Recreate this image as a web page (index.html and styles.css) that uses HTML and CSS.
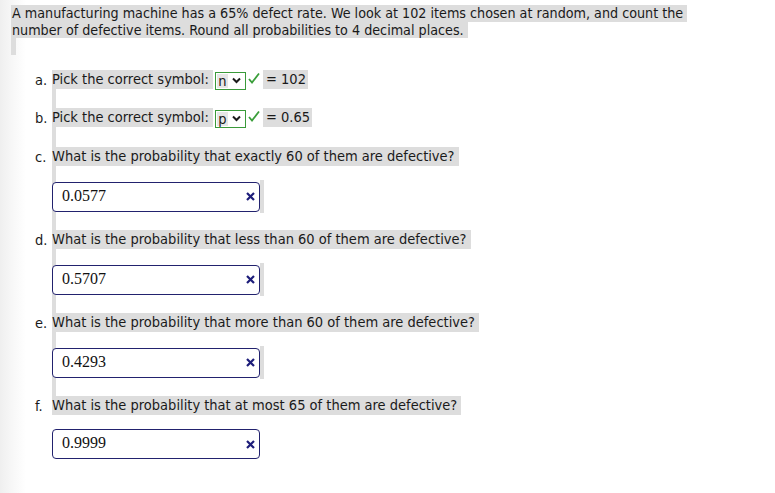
FILE: index.html
```html
<!DOCTYPE html>
<html>
<head>
<meta charset="utf-8">
<link rel="stylesheet" href="styles.css">
</head>
<body>
<div class="problem">
  <div class="line">A manufacturing machine has a 65% defect rate. We look at 102 items chosen at random, and count the </div>
  <div class="line">number of defective items. Round all probabilities to 4 decimal places. </div>
  <div class="empty"></div>
</div>

<div class="parts">
  <div class="sel">
    <div class="q">
      <span class="mk">a.</span><span class="hl">Pick the correct symbol: </span><span class="select"><span class="val">n</span><svg class="chev" width="9" height="7" viewBox="0 0 9 7"><polyline points="1,1.5 4.5,5 8,1.5" fill="none" stroke="#1a1a1a" stroke-width="2"/></svg></span><svg class="check" width="12" height="12" viewBox="0 0 12 12"><polyline points="1,7 4,10.5 11,1.5" fill="none" stroke="#3a9e3a" stroke-width="1.8"/></svg><span class="hl eq">= 102</span>
    </div>
    <div class="gap-ab"></div>
    <div class="q">
      <span class="mk">b.</span><span class="hl">Pick the correct symbol: </span><span class="select"><span class="val">p</span><svg class="chev" width="9" height="7" viewBox="0 0 9 7"><polyline points="1,1.5 4.5,5 8,1.5" fill="none" stroke="#1a1a1a" stroke-width="2"/></svg></span><svg class="check" width="12" height="12" viewBox="0 0 12 12"><polyline points="1,7 4,10.5 11,1.5" fill="none" stroke="#3a9e3a" stroke-width="1.8"/></svg><span class="hl eq">= 0.65</span>
    </div>
    <div class="gap-bc"></div>

    <div class="q"><span class="mk">c.</span><span class="hl">What is the probability that exactly 60 of them are defective? </span></div>
    <div class="ans">
      <div class="field"><span class="num">0.0577</span><svg class="x" width="9" height="9" viewBox="0 0 9 9"><path d="M1 1L8 8M8 1L1 8" stroke="#1d1d7a" stroke-width="2.2" fill="none"/></svg></div><span class="tail"></span>
    </div>

    <div class="q"><span class="mk">d.</span><span class="hl">What is the probability that less than 60 of them are defective? </span></div>
    <div class="ans">
      <div class="field"><span class="num">0.5707</span><svg class="x" width="9" height="9" viewBox="0 0 9 9"><path d="M1 1L8 8M8 1L1 8" stroke="#1d1d7a" stroke-width="2.2" fill="none"/></svg></div><span class="tail"></span>
    </div>

    <div class="q"><span class="mk">e.</span><span class="hl">What is the probability that more than 60 of them are defective? </span></div>
    <div class="ans">
      <div class="field"><span class="num">0.4293</span><svg class="x" width="9" height="9" viewBox="0 0 9 9"><path d="M1 1L8 8M8 1L1 8" stroke="#1d1d7a" stroke-width="2.2" fill="none"/></svg></div><span class="tail"></span>
    </div>

    <div class="q"><span class="mk">f.</span><span class="hl">What is the probability that at most 65 of them are defective? </span></div>
  </div>
  <div class="ans last">
    <div class="field"><span class="num">0.9999</span><svg class="x" width="9" height="9" viewBox="0 0 9 9"><path d="M1 1L8 8M8 1L1 8" stroke="#1d1d7a" stroke-width="2.2" fill="none"/></svg></div>
  </div>
</div>
</body>
</html>
```
FILE: styles.css
```css
html, body {
  margin: 0;
  height: 100%;
}
body {
  background: linear-gradient(to right, #efefef 0px, #f7f7f7 12px, #fff 26px);
  font-family: "DejaVu Sans Condensed", "DejaVu Sans", sans-serif;
  font-size: 14.2px;
  color: #1a1a1a;
}
.problem {
  padding: 5px 0 0 11px;
}
.line {
  width: fit-content;
  background: #dddddd;
  height: 16.5px;
  line-height: 16.5px;
  padding-left: 1px;
  white-space: pre;
}
.empty {
  width: 5px;
  height: 17px;
  background: #dddddd;
}
.parts {
  margin-top: 15px;
  padding-left: 35px;
  font-size: 14.5px;
}
.sel {
  background: linear-gradient(#dddddd, #dddddd) 17px 0 / 4px 100% no-repeat;
}
.q {
  display: flex;
  align-items: center;
  height: 19px;
  white-space: pre;
}
.mk {
  width: 17px;
  flex: none;
}
.hl {
  background: #dddddd;
  height: 19px;
  line-height: 19px;
}
.select {
  display: flex;
  align-items: center;
  box-sizing: border-box;
  width: 31px;
  height: 18px;
  margin: 2px 0 0 2px;
  border: 1px solid #3a9a3a;
  padding: 1px;
}
.val {
  background: #e6e6e6;
  height: 14px;
  line-height: 14px;
  width: 11px;
  text-align: center;
}
.chev {
  margin-left: 4px;
}
.check {
  margin: -3px 0 0 2px;
}
.eq {
  margin-left: 3px;
  padding: 0 2px 0 3px;
}
.gap-ab {
  height: 19px;
}
.gap-bc {
  height: 20px;
}
.ans {
  display: flex;
  align-items: center;
  margin-left: 17px;
  padding: 14px 0 17px;
}
.ans.last {
  padding-bottom: 0;
}
.field {
  box-sizing: border-box;
  width: 208px;
  height: 30px;
  border: 1px solid #22226e;
  border-radius: 4px;
  background: #fff;
  display: flex;
  align-items: center;
  justify-content: space-between;
  padding: 0 4px 0 9px;
}
.num {
  font-family: "Liberation Serif", serif;
  font-size: 16px;
  color: #111;
  margin-top: -2px;
}
.tail {
  width: 4px;
  height: 33px;
  background: #dddddd;
}
```
